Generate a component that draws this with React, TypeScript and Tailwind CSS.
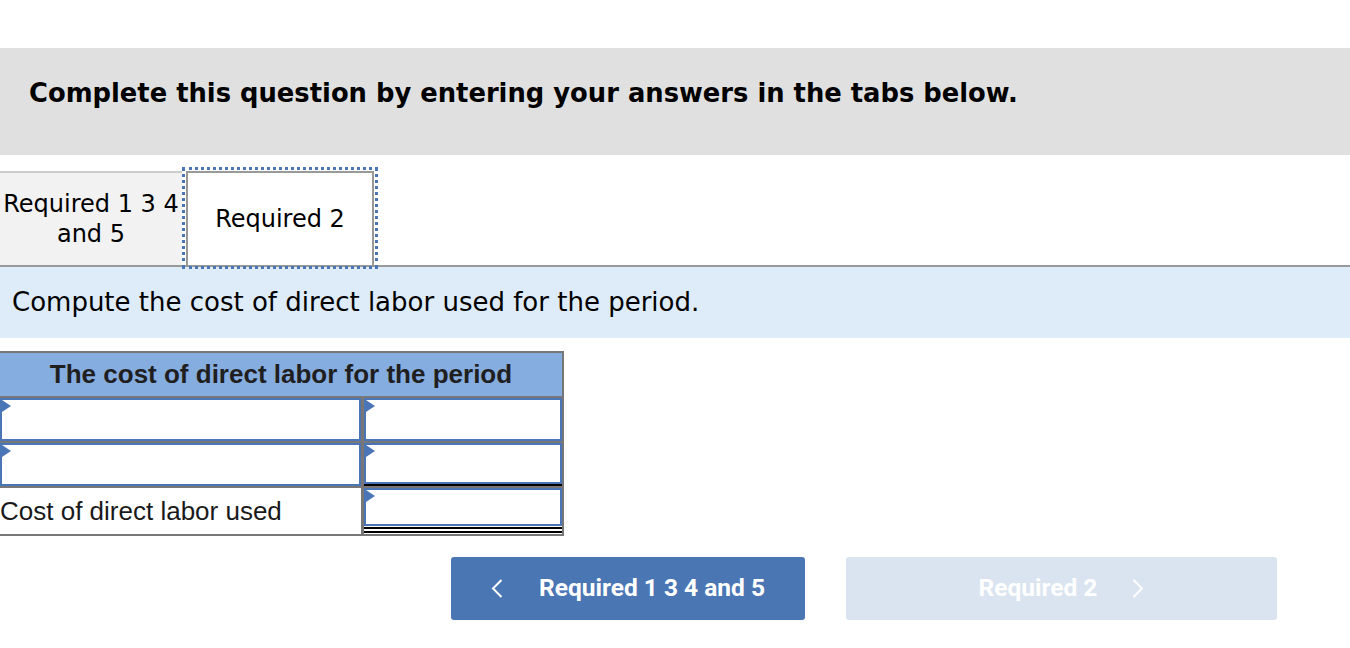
import React from 'react'

const Marker = () => (
  <span className="absolute left-0 top-0 w-0 h-0 border-y-[6px] border-y-transparent border-l-[9px] border-l-[#4a76b8]" />
)

const InputCell: React.FC<{ width: string; underline?: 'single' | 'double' }> = ({ width, underline }) => (
  <div className={`${width} h-full flex flex-col`}>
    <div className="relative flex-1 border-2 border-[#4a76b8] bg-white">
      <Marker />
    </div>
    {underline === 'single' && <div className="h-[2px] bg-black" />}
    {underline === 'double' && (
      <div className="flex flex-col gap-[2px] py-[1px]">
        <div className="h-[2px] bg-black" />
        <div className="h-[2px] bg-black" />
      </div>
    )}
  </div>
)

export default function App() {
  return (
    <div className="w-[1350px] h-[648px] bg-white overflow-hidden pt-[48px] font-['DejaVu_Sans',Verdana,sans-serif]">
      <div className="h-[107px] bg-[#e0e0e0] flex items-start pt-[30px] px-[29px]">
        <h1 className="text-[25.8px] leading-[30px] font-bold text-black whitespace-nowrap">
          Complete this question by entering your answers in the tabs below.
        </h1>
      </div>

      {/* tabs */}
      <div className="mt-[16px] flex items-end h-[94px]">
        <div className="w-[182px] h-[94px] bg-[#f2f2f2] border-t-2 border-[#cccccc] flex items-center justify-center text-center text-[24px] leading-[30px] text-black whitespace-nowrap">
          Required 1 3 4<br />and 5
        </div>
        <div className="relative ml-[4px] w-[188px] h-[94px] outline-[3px] outline-dotted outline-[#4a76b8] outline-offset-[1px]">
          <div className="w-full h-full bg-white border-2 border-[#999999] border-b-0 flex items-center justify-center text-[24px] text-black">
            Required 2
          </div>
        </div>
      </div>

      <div className="h-[2px] bg-[#999999]" />
      <div className="h-[71px] bg-[#deebf8] flex items-center px-[12px]">
        <p className="text-[26px] text-black">Compute the cost of direct labor used for the period.</p>
      </div>

      {/* answer table */}
      <div className="mt-[13px] w-[564px] border-t-2 border-r-2 border-[#777777] font-['Liberation_Sans',Arial,sans-serif]">
        <div className="h-[45px] bg-[#86ade0] border-b-2 border-[#777777] flex items-center justify-center text-[26px] font-bold text-[#1f1f1f]">
          The cost of direct labor for the period
        </div>
        <div className="h-[45px] flex border-b-2 border-[#777777]">
          <InputCell width="w-[361px]" />
          <div className="w-[3px] bg-[#777777]" />
          <div className="w-[198px] h-full"><InputCell width="w-full" /></div>
        </div>
        <div className="h-[45px] flex border-b-2 border-[#777777]">
          <InputCell width="w-[361px]" />
          <div className="w-[3px] bg-[#777777]" />
          <div className="w-[198px] h-full"><InputCell width="w-full" underline="single" /></div>
        </div>
        <div className="h-[48px] flex border-b-2 border-[#777777]">
          <div className="w-[361px] flex items-center text-[26px] text-[#1a1a1a] whitespace-nowrap">Cost of direct labor used</div>
          <div className="w-[3px] bg-[#777777]" />
          <div className="w-[198px] h-full"><InputCell width="w-full" underline="double" /></div>
        </div>
      </div>

      {/* nav buttons */}
      <div className="mt-[21px] flex gap-[41px] pl-[451px] font-['Roboto',sans-serif]">
        <button className="w-[354px] h-[63px] rounded-[3px] bg-[#4a76b4] text-white flex items-center justify-center gap-[36px] text-[24.5px] font-bold">
          <svg width="12" height="19" viewBox="0 0 12 19" fill="none" stroke="white" strokeWidth="2">
            <path d="M10.5 1 L2 9.5 L10.5 18" />
          </svg>
          <span>Required 1 3 4 and 5</span>
        </button>
        <button className="w-[431px] h-[63px] rounded-[3px] bg-[#dae4f0] text-white flex items-center justify-center gap-[35px] text-[24.5px] font-bold">
          <span>Required 2</span>
          <svg width="12" height="19" viewBox="0 0 12 19" fill="none" stroke="white" strokeWidth="2">
            <path d="M1.5 1 L10 9.5 L1.5 18" />
          </svg>
        </button>
      </div>
    </div>
  )
}
